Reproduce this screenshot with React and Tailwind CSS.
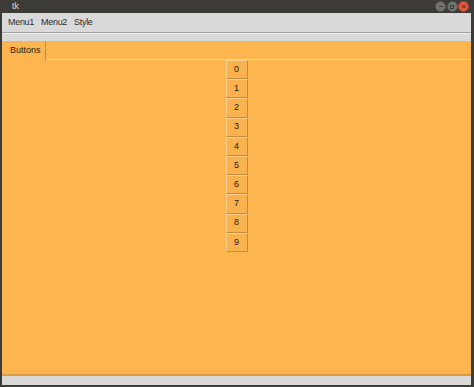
import React from 'react';

const font = { fontFamily: '"Liberation Sans", Arial, sans-serif' };

export default function App() {
  const buttons = ['0', '1', '2', '3', '4', '5', '6', '7', '8', '9'];

  return (
    <div
      className="w-[474px] h-[387px] bg-[#3c3b37] flex flex-col overflow-hidden"
      style={font}
    >
      {/* Title bar */}
      <div className="h-[13px] flex items-center justify-between pl-[12px] pr-[5px]">
        <span className="text-[9px] leading-none text-[#dfdbd2]">tk</span>
        <div className="flex items-center gap-[0.5px]">
          <span className="w-[11px] h-[11px] rounded-full bg-[#76746e] border border-[#55534e] flex items-center justify-center">
            <span className="w-[4px] h-[1px] bg-[#3c3b37]"></span>
          </span>
          <span className="w-[11px] h-[11px] rounded-full bg-[#76746e] border border-[#55534e] flex items-center justify-center">
            <span className="w-[4px] h-[4px] border border-[#3c3b37]"></span>
          </span>
          <span className="w-[11px] h-[11px] rounded-full bg-[#e5573b] border border-[#a8402a] flex items-center justify-center text-[8px] leading-none text-[#3c3b37] font-bold">
            ×
          </span>
        </div>
      </div>

      {/* Window body */}
      <div className="flex-1 flex flex-col ml-[2px] mr-[3px] mb-[2px] bg-[#d9d9d9]">
        {/* Menu bar */}
        <div className="h-[20px] flex items-center gap-[7px] pl-[6px] border-b border-[#a3a3a3] text-[9px] tracking-[-0.3px] text-[#2e2e2e]">
          <span>Menu1</span>
          <span>Menu2</span>
          <span>Style</span>
        </div>
        <div className="h-[8px] border-t border-[#efefef]"></div>

        {/* Notebook */}
        <div className="flex-1 flex flex-col bg-[#fdb54f] border-b-[2px] border-[#d99b45]">
          <div className="flex h-[19px]">
            <div className="ml-[1px] pl-[7px] pr-[4px] flex items-center border-r border-[#c98c3d] text-[9px] text-[#2a2112]">
              Buttons
            </div>
            <div className="flex-1 border-b border-[#fdd49a]"></div>
          </div>
          <div className="flex-1 flex flex-col items-center">
            {buttons.map((b) => (
              <div
                key={b}
                className="w-[22px] h-[19.2px] flex items-center justify-center bg-[#f9b24e] border border-[#c98c3d] border-t-[#fdcf8a] border-l-[#fdcf8a] text-[9px] text-[#2a2112]"
              >
                {b}
              </div>
            ))}
          </div>
        </div>
        <div className="h-[9px] bg-[#d9d9d9]"></div>
      </div>
    </div>
  );
}
